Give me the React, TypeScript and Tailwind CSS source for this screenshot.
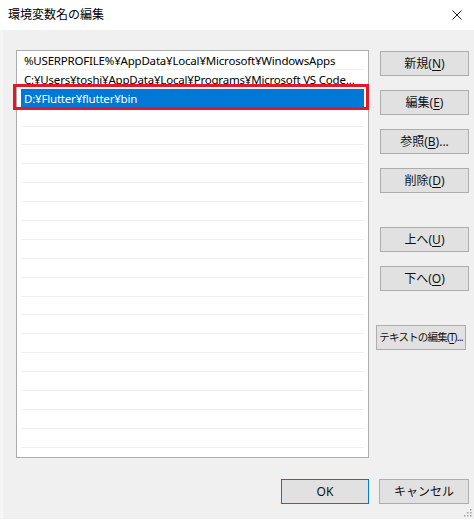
const ui = '"Noto Sans", "Noto Sans CJK JP", sans-serif';

const paths = [
  "%USERPROFILE%¥AppData¥Local¥Microsoft¥WindowsApps",
  "C:¥Users¥toshi¥AppData¥Local¥Programs¥Microsoft VS Code¥bin",
  "D:¥Flutter¥flutter¥bin",
];

function Btn({ label, mnemonic, tail = "", className = "" }: { label: string; mnemonic: string; tail?: string; className?: string }) {
  return (
    <button
      className={
        "h-[25px] w-[89px] shrink-0 bg-[#e1e1e1] border border-[#adadad] text-[#111] leading-none flex items-center justify-center whitespace-nowrap overflow-hidden " +
        className
      }
    >
      {label}(<span className="underline underline-offset-2">{mnemonic}</span>){tail}
    </button>
  );
}

export default function App() {
  const rows = Array.from({ length: 21 }, (_, i) => paths[i] ?? "");

  return (
    <div className="w-[474px] h-[522px] bg-white flex flex-col overflow-hidden" style={{ fontFamily: ui }}>
      {/* title bar */}
      <div className="h-[30px] shrink-0 flex items-center justify-between pl-[8px] pr-[12px]">
        <span className="text-[12px] text-black">環境変数名の編集</span>
        <svg width="10" height="10" viewBox="0 0 10 10">
          <path d="M0.5 0.5 L9.5 9.5 M9.5 0.5 L0.5 9.5" stroke="#222" strokeWidth="1" />
        </svg>
      </div>

      {/* body */}
      <div className="relative flex-1 bg-[#f0f0f0] border-l-[3px] border-[#f5f5f5] pl-[13px] pt-[20px] mb-[3px]">
        <div className="flex">
          {/* list */}
          <div className="w-[353px] h-[408px] shrink-0 bg-white border border-[#acacac] px-[4px] overflow-hidden">
            {rows.map((text, i) => (
              <div
                key={i}
                className={
                  "h-[18.9px] border-b border-[#f0f0f0] px-[3px] pt-[2px] text-[11.5px] tracking-[-0.2px] leading-[16px] whitespace-nowrap overflow-hidden text-ellipsis " +
                  (i === 2 ? "bg-[#0078d7] text-white" : "text-black")
                }
              >
                {text}
              </div>
            ))}
          </div>

          {/* buttons */}
          <div className="flex flex-col ml-[11px] pt-[1px]">
            <Btn label="新規" mnemonic="N" className="text-[12px]" />
            <Btn label="編集" mnemonic="E" className="mt-[14px] text-[12px]" />
            <Btn label="参照" mnemonic="B" tail="..." className="mt-[14px] text-[12px]" />
            <Btn label="削除" mnemonic="D" className="mt-[14px] text-[12px]" />
            <Btn label="上へ" mnemonic="U" className="mt-[34px] text-[12px]" />
            <Btn label="下へ" mnemonic="O" className="mt-[14px] text-[12px]" />
            <Btn label="テキストの編集" mnemonic="T" tail="..." className="mt-[34px] w-[90px] -ml-[4px] text-[10.5px] tracking-[-0.8px]" />
          </div>
        </div>

        {/* red annotation box */}
        <div className="absolute left-[10px] top-[54px] w-[356px] h-[26px] border-[3px] border-[#e3192b] pointer-events-none" />

        {/* bottom buttons */}
        <div className="flex justify-end gap-[10px] mt-[21px] pr-[5px]">
          <button className="h-[25px] w-[88px] bg-[#e1e1e1] border border-[#0078d7] text-[12px] text-[#111]">OK</button>
          <button className="h-[25px] w-[90px] bg-[#e1e1e1] border border-[#adadad] text-[12px] text-[#111]">キャンセル</button>
        </div>

        {/* resize grip */}
        <svg width="10" height="10" viewBox="0 0 10 10" className="absolute right-[2px] bottom-[2px]">
          {[
            [8, 2],
            [5, 5],
            [8, 5],
            [2, 8],
            [5, 8],
            [8, 8],
          ].map(([x, y], i) => (
            <rect key={i} x={x} y={y} width="1.5" height="1.5" fill="#a0a0a0" />
          ))}
        </svg>
      </div>
    </div>
  );
}
